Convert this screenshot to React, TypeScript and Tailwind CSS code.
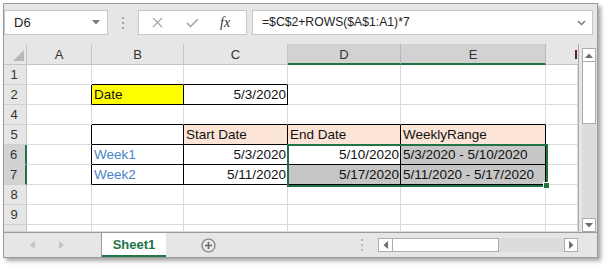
import React from 'react';

const COLS = ['A', 'B', 'C', 'D', 'E', 'F'];
const ROWS = ['1', '2', '4', '5', '6', '7', '8', '9', ''];

// cells with a thin black border round them
const BOXED = new Set(['2B', '2C', '5B', '5C', '5D', '5E', '6B', '6C', '6D', '6E', '7B', '7C', '7D', '7E']);

type Cell = { text: string; right?: boolean; blue?: boolean; bg?: 'yellow' | 'peach' | 'sel' };

const DATA: Record<string, Cell> = {
    '2B': { text: 'Date', bg: 'yellow' },
    '2C': { text: '5/3/2020', right: true },
    '5C': { text: 'Start Date', bg: 'peach' },
    '5D': { text: 'End Date', bg: 'peach' },
    '5E': { text: 'WeeklyRange', bg: 'peach' },
    '6B': { text: 'Week1', blue: true },
    '6C': { text: '5/3/2020', right: true },
    '6D': { text: '5/10/2020', right: true },
    '6E': { text: '5/3/2020 - 5/10/2020', bg: 'sel' },
    '7B': { text: 'Week2', blue: true },
    '7C': { text: '5/11/2020', right: true },
    '7D': { text: '5/17/2020', right: true, bg: 'sel' },
    '7E': { text: '5/11/2020 - 5/17/2020', bg: 'sel' },
};

const isBoxed = (ri: number, ci: number) => {
    const r = ROWS[ri];
    const c = COLS[ci];
    if (!r || !c) return false;
    return BOXED.has(r + c);
};

const GridCell: React.FC<{ ri: number; ci: number }> = ({ ri, ci }) => {
    const key = ROWS[ri] + COLS[ci];
    const cell = DATA[key];
    const rightBlack = isBoxed(ri, ci) || isBoxed(ri, ci + 1);
    const bottomBlack = isBoxed(ri, ci) || isBoxed(ri + 1, ci);

    let bg = 'bg-white';
    if (cell?.bg === 'yellow') bg = 'bg-[#ffff00]';
    if (cell?.bg === 'peach') bg = 'bg-[#fce4d6]';
    if (cell?.bg === 'sel') bg = 'bg-[#c6c6c6]';

    return (
        <div
            className={`box-border border-r border-b overflow-visible whitespace-nowrap text-[13.5px] leading-[20px] ${bg} ${rightBlack ? 'border-r-black' : 'border-r-[#dadada]'} ${bottomBlack ? 'border-b-black' : 'border-b-[#dadada]'} ${cell?.right ? 'text-right pr-[1px]' : 'pl-[2px]'} ${cell?.blue ? 'text-[#4a84c9]' : 'text-[#111]'}`}
        >
            {cell?.text}
        </div>
    );
};

const App: React.FC = () => {
    return (
        <div className="w-[608px] h-[268px] bg-white pl-[3px] pt-[3px] font-['Liberation_Sans',Arial,sans-serif]">
            <div className="w-[595px] h-[255px] box-border border border-[#9a9a9a] bg-[#e6e6e6] flex flex-col overflow-hidden shadow-[3px_3px_4px_rgba(0,0,0,0.35)]">
                {/* Formula bar */}
                <div className="h-[40px] flex items-start pt-[6px] shrink-0">
                    <div className="w-[104px] h-[25px] box-border border border-[#c6c6c6] bg-white flex items-center justify-between pl-[9px] pr-[7px] text-[13px] text-[#222]">
                        <span>D6</span>
                        <svg width="8" height="5" viewBox="0 0 8 5"><polygon points="0,0 8,0 4,4.5" fill="#7a7a7a" /></svg>
                    </div>
                    <div className="w-[30px] h-[25px] flex flex-col items-center justify-center gap-[3px]">
                        <div className="w-[2px] h-[2px] bg-[#a8a8a8]" />
                        <div className="w-[2px] h-[2px] bg-[#a8a8a8]" />
                        <div className="w-[2px] h-[2px] bg-[#a8a8a8]" />
                    </div>
                    <div className="w-[109px] h-[25px] box-border border border-[#c6c6c6] bg-white flex items-center">
                        <svg className="ml-[13px]" width="11" height="11" viewBox="0 0 11 11">
                            <path d="M1 1 L10 10 M10 1 L1 10" stroke="#a9a9a9" strokeWidth="1.3" />
                        </svg>
                        <svg className="ml-[23px]" width="13" height="10" viewBox="0 0 13 10">
                            <path d="M1 5 L4.5 8.5 L12 1" stroke="#a9a9a9" strokeWidth="1.6" fill="none" />
                        </svg>
                        <span className="ml-[21px] font-['Liberation_Serif',serif] italic text-[14px] text-[#333] leading-none">fx</span>
                    </div>
                    <div className="ml-[5px] w-[341px] h-[25px] box-border border border-[#c6c6c6] bg-white flex items-center justify-between pl-[9px] pr-[6px] text-[12.2px] text-[#222]">
                        <span>=$C$2+ROWS($A$1:A1)*7</span>
                        <svg width="9" height="6" viewBox="0 0 9 6"><path d="M1 1 L4.5 4.5 L8 1" stroke="#7a7a7a" strokeWidth="1.5" fill="none" /></svg>
                    </div>
                </div>

                {/* Sheet + vertical scrollbar */}
                <div className="h-[188px] flex shrink-0">
                    <div className="relative w-[575px] box-border border-r border-[#ababab] overflow-hidden grid grid-cols-[23px_65px_92px_104px_113px_145px_32px] grid-rows-[21px_repeat(8,20px)_7px]">
                        {/* column headers */}
                        <div className="box-border border-r border-b border-[#c4c4c4] flex items-end justify-end pr-[2px] pb-[3px]">
                            <svg width="11" height="11" viewBox="0 0 11 11"><polygon points="11,0 11,11 0,11" fill="#b8b8b8" /></svg>
                        </div>
                        {COLS.map((c) => {
                            const sel = c === 'D' || c === 'E';
                            if (c === 'F') {
                                return (
                                    <div key={c} className="box-border border-b border-[#c4c4c4] flex items-center justify-end">
                                        <div className="w-[2px] h-[9px] mt-[1px] mr-px bg-[#5a1f2a]" />
                                    </div>
                                );
                            }
                            return (
                                <div
                                    key={c}
                                    className={`box-border border-r flex items-center justify-center text-[13px] pt-[2px] ${sel ? 'bg-[#d2d2d2] border-r-[#b8b8b8] border-b-2 border-b-[#217346] text-[#333]' : 'border-r-[#c4c4c4] border-b border-b-[#c4c4c4] text-[#333]'}`}
                                >
                                    {c}
                                </div>
                            );
                        })}

                        {/* rows */}
                        {ROWS.map((r, ri) => {
                            const sel = r === '6' || r === '7';
                            return (
                                <React.Fragment key={ri}>
                                    <div
                                        className={`box-border border-b border-b-[#d0d0d0] flex items-center justify-center pr-[2px] text-[13px] text-[#333] ${sel ? 'bg-[#d2d2d2] border-r-2 border-r-[#217346]' : 'border-r border-r-[#c4c4c4]'}`}
                                    >
                                        {r}
                                    </div>
                                    {COLS.map((_, ci) => (
                                        <GridCell key={ci} ri={ri} ci={ci} />
                                    ))}
                                </React.Fragment>
                            );
                        })}

                        {/* selection D6:E7, drawn over the cells */}
                        <div className="absolute left-[283px] top-[100px] w-[261px] h-[43px] box-border border-2 border-[#217346] pointer-events-none">
                            <div className="absolute -right-[4px] -bottom-[4px] w-[5px] h-[5px] bg-[#217346] border border-white box-content" />
                        </div>
                    </div>

                    <div className="ml-[3px] mt-[4px] w-[14px] flex flex-col">
                        <div className="h-[14px] box-border border border-[#ababab] bg-white flex items-center justify-center">
                            <svg width="8" height="5" viewBox="0 0 8 5"><polygon points="0,5 8,5 4,0.5" fill="#6e6e6e" /></svg>
                        </div>
                        <div className="h-[62px] box-border border border-t-0 border-[#ababab] bg-white" />
                        <div className="flex-1 bg-[#dcdcdc]" />
                        <div className="h-[14px] box-border border border-[#ababab] bg-white flex items-center justify-center">
                            <svg width="8" height="5" viewBox="0 0 8 5"><polygon points="0,0 8,0 4,4.5" fill="#6e6e6e" /></svg>
                        </div>
                    </div>
                </div>

                {/* Sheet tabs + horizontal scrollbar */}
                <div className="h-[25px] box-border border-t border-[#9b9b9b] flex shrink-0">
                    <div className="w-[98px] box-border border-r border-[#9b9b9b] flex items-center">
                        <svg className="ml-[26px]" width="5" height="8" viewBox="0 0 5 8"><polygon points="5,0 5,8 0,4" fill="#c4c4c4" /></svg>
                        <svg className="ml-[24px]" width="5" height="8" viewBox="0 0 5 8"><polygon points="0,0 0,8 5,4" fill="#c4c4c4" /></svg>
                    </div>
                    <div className="w-[64px] bg-white box-border border-b-2 border-[#217346] flex items-center justify-center pt-[1px] text-[13px] font-bold text-[#217346]">
                        Sheet1
                    </div>
                    <div className="flex-1 flex items-center">
                        <svg className="ml-[35px]" width="15" height="15" viewBox="0 0 15 15">
                            <circle cx="7.5" cy="7.5" r="6.5" stroke="#7a7a7a" strokeWidth="1.2" fill="none" />
                            <path d="M7.5 4 V11 M4 7.5 H11" stroke="#6a6a6a" strokeWidth="1.6" />
                        </svg>
                        <div className="ml-[145px] flex flex-col gap-[3px]">
                            <div className="w-[2px] h-[2px] bg-[#b5b5b5]" />
                            <div className="w-[2px] h-[2px] bg-[#b5b5b5]" />
                            <div className="w-[2px] h-[2px] bg-[#b5b5b5]" />
                        </div>
                        <div className="ml-[15px] flex h-[14px]">
                            <div className="w-[15px] box-border border border-[#ababab] bg-white flex items-center justify-center">
                                <svg width="5" height="8" viewBox="0 0 5 8"><polygon points="5,0 5,8 0.5,4" fill="#6e6e6e" /></svg>
                            </div>
                            <div className="w-[106px] box-border border border-l-0 border-[#ababab] bg-white" />
                            <div className="w-[65px] bg-[#dcdcdc]" />
                            <div className="w-[14px] box-border border border-[#ababab] bg-white flex items-center justify-center">
                                <svg width="5" height="8" viewBox="0 0 5 8"><polygon points="0,0 0,8 4.5,4" fill="#6e6e6e" /></svg>
                            </div>
                        </div>
                    </div>
                </div>
            </div>
        </div>
    );
};

export default App;
